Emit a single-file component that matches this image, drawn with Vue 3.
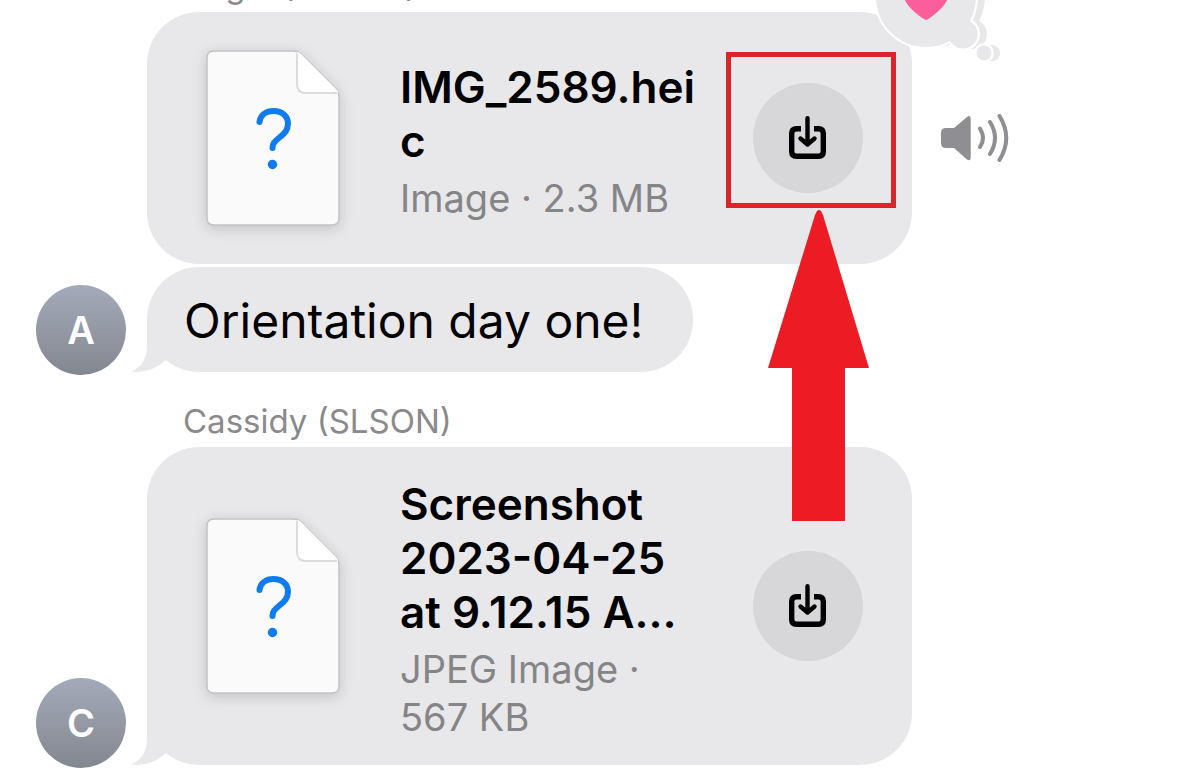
<script setup>
const messages = [
  {
    id: 1,
    kind: 'file',
    sender: 'Angie (SLSON)',
    title: 'IMG_2589.heic',
    meta: 'Image · 2.3\u00a0MB',
    highlighted: true
  },
  { id: 2, kind: 'text', initial: 'A', text: 'Orientation day one!' },
  {
    id: 3,
    kind: 'file',
    sender: 'Cassidy (SLSON)',
    initial: 'C',
    title: 'Screenshot 2023-04-25 at\u00a09.12.15 A…',
    meta: 'JPEG Image · 567\u00a0KB'
  }
]
</script>

<template>
  <main class="chat">
    <section class="feed">
      <article v-for="m in messages" :key="m.id" class="message">
        <p v-if="m.sender" class="sender">{{ m.sender }}</p>
        <div class="row">
          <div class="side">
            <span v-if="m.initial" class="avatar">{{ m.initial }}</span>
          </div>

          <div v-if="m.kind === 'file'" class="bubble card">
            <svg class="file" viewBox="0 0 134 177" aria-hidden="true">
              <path class="sheet" d="M8 1H87Q92 1 95 4L130 39Q133 42 133 47V168Q133 175 126 175H8Q1 175 1 168V8Q1 1 8 1Z" />
              <path class="fold" d="M91 2V34Q91 43 100 43H132Q132 41 130 39L95 4Q93 2 91 2Z" />
              <path class="fold-line" d="M91 3V34Q91 43 100 43H131" />
              <path class="mark" d="M53.500 72C54.500 65 60 61 67.500 61C76 61 82 66 82 73.500C82 80 78.500 83.500 73.500 87.500C68.500 91.500 66.500 93.500 66.500 98" />
              <circle class="dot" cx="66.500" cy="114.500" r="4.700" />
            </svg>
            <div class="info">
              <h2 class="title">{{ m.title }}</h2>
              <p class="meta">{{ m.meta }}</p>
            </div>
            <div class="action">
              <button class="download" type="button" :aria-label="'Download ' + m.title">
                <svg viewBox="0 0 40 46" aria-hidden="true">
                  <path class="tray" d="M13 13.700H8.500Q3.700 13.700 3.700 18.500V36.500Q3.700 41.300 8.500 41.300H30.500Q35.300 41.300 35.300 36.500V18.500Q35.300 13.700 30.500 13.700H26" />
                  <path class="down" d="M19.500 3.200V29M12.500 23.500L19.500 29.500L26.500 23.500" />
                </svg>
              </button>
              <template v-if="m.highlighted">
                <span class="frame"></span>
                <svg class="arrow" viewBox="0 0 101 311" aria-hidden="true">
                  <path d="M49 1Q51 -1 53 1L55 5L101 158H77V311H24V158H0L47 5Z" />
                </svg>
              </template>
            </div>
            <svg v-if="m.highlighted" class="reaction" viewBox="0 0 134 77" aria-hidden="true">
              <g>
                <circle cx="65" cy="-3" r="50" />
                <circle cx="102" cy="34" r="15" />
                <circle cx="122" cy="53" r="8" />
              </g>
              <g class="front-edge">
                <circle cx="56" cy="-3" r="52" />
                <circle cx="93" cy="34" r="17" />
                <circle cx="114" cy="53" r="10" />
              </g>
              <g class="front">
                <circle cx="56" cy="-3" r="50" />
                <circle cx="93" cy="34" r="14.500" />
                <circle cx="114" cy="53" r="7.500" />
              </g>
              <path class="heart" d="M56 20Q53 19 47 14Q37 6 34 -2Q31 -16 44 -18Q52 -18 56 -11Q60 -18 68 -18Q81 -16 78 -2Q75 6 65 14Q59 19 56 20Z" />
            </svg>
            <svg v-if="m.initial" class="tail" viewBox="0 0 52 52" aria-hidden="true">
              <path d="M16 0V26Q16 45 0 51.500Q20 54 35 40L52 32V0Z" />
            </svg>
          </div>

          <div v-else class="bubble text">
            <p>{{ m.text }}</p>
            <svg class="tail" viewBox="0 0 52 52" aria-hidden="true">
              <path d="M16 0V26Q16 45 0 51.500Q20 54 35 40L52 32V0Z" />
            </svg>
          </div>

          <button v-if="m.highlighted" class="speaker" type="button" aria-label="Play sound">
            <svg viewBox="0 0 70 50" aria-hidden="true">
              <path class="cone" d="M6 15H14L27 4Q30.700 1.500 30.700 6V44Q30.700 49 27 46.500L14 35H6Q1 35 1 30V20Q1 15 6 15Z" />
              <path class="wave" d="M40 15.500Q46 25 40 34M50 9Q60 25 50 41M59.500 3Q73 25 59.500 47" />
            </svg>
          </button>
        </div>
      </article>
    </section>
  </main>
</template>

<style>
body {
  margin: 0;
  background: #fff;
}
</style>

<style scoped>
.chat {
  height: 100vh;
  overflow: hidden;
  background: #fff;
  font-family: Inter, "Liberation Sans", sans-serif;
  color: #000;
}
/* The thread is scrolled so that its first name is partly out of view. */
.feed {
  margin-top: -63px;
}
.message + .message {
  margin-top: 3px;
}
.message:last-child {
  margin-top: 0;
}
p,
h2 {
  margin: 0;
}
.sender {
  padding: 29px 36px 6px 183px;
  font-size: 33px;
  line-height: 40px;
  color: #8a8a8d;
}
.row {
  display: flex;
  align-items: flex-end;
  padding-left: 36px;
}
.side {
  flex: 0 0 111px;
}
.avatar {
  display: flex;
  align-items: center;
  justify-content: center;
  width: 90px;
  height: 90px;
  margin-bottom: -3px;
  border-radius: 50%;
  background: linear-gradient(#a4aaba, #83878f);
  color: #fff;
  font-size: 38px;
  font-weight: 600;
}
.bubble {
  position: relative;
  box-sizing: border-box;
  border-radius: 52px;
  background: #e8e8ea;
}
.tail {
  position: absolute;
  left: -16px;
  bottom: 0;
  width: 52px;
  height: 52px;
  fill: #e8e8ea;
}
.text {
  padding: 24px 50px 21px 37px;
  font-size: 48px;
  line-height: 60px;
}
.text p {
  position: relative;
  z-index: 1;
}
.card {
  display: flex;
  align-items: center;
  flex: 0 1 765px;
  min-height: 252px;
  padding: 0 49px 0 59px;
}
.file {
  flex: none;
  width: 134px;
  height: 177px;
  overflow: visible;
  filter: drop-shadow(0 3px 7px rgba(0, 0, 0, 0.16));
}
.sheet {
  fill: #fafafa;
  stroke: #c4c4c7;
  stroke-width: 1.5;
}
.fold {
  fill: #fff;
}
.fold-line {
  fill: none;
  stroke: #dcdcde;
  stroke-width: 2;
}
.mark {
  fill: none;
  stroke: #0f7bf0;
  stroke-width: 6;
  stroke-linecap: round;
}
.dot {
  fill: #0f7bf0;
}
.info {
  flex: 1;
  min-width: 0;
  padding: 30px 48px 24px 60px;
}
.title {
  font-size: 44px;
  line-height: 54px;
  font-weight: 600;
  overflow-wrap: anywhere;
}
.meta {
  margin-top: 6px;
  font-size: 38px;
  line-height: 48px;
  color: #858588;
}
.action {
  position: relative;
  flex: none;
}
button {
  padding: 0;
  border: 0;
  background: none;
  cursor: pointer;
}
.download {
  display: flex;
  align-items: center;
  justify-content: center;
  width: 110px;
  height: 110px;
  border-radius: 50%;
  background: #d7d7d9;
}
.download svg {
  width: 40px;
  height: 46px;
  fill: none;
  stroke: #000;
}
.tray {
  stroke-width: 5.4;
}
.down {
  stroke-width: 4.4;
  stroke-linecap: round;
  stroke-linejoin: round;
}
.frame {
  position: absolute;
  top: -31px;
  left: -27px;
  box-sizing: border-box;
  width: 170px;
  height: 156px;
  border: 5px solid #dc2429;
  pointer-events: none;
}
.arrow {
  position: absolute;
  top: 127px;
  left: 15px;
  z-index: 2;
  width: 101px;
  height: 311px;
  fill: #ed1c24;
  pointer-events: none;
}
.reaction {
  position: absolute;
  top: -12px;
  right: -92px;
  width: 134px;
  height: 77px;
  fill: #e8e8ea;
}
.front-edge {
  fill: #fff;
}
.heart {
  fill: #fc5d9b;
}
.speaker {
  align-self: center;
  flex: none;
  height: 50px;
  margin-left: 28px;
}
.speaker svg {
  display: block;
  width: 70px;
  height: 50px;
}
.cone {
  fill: #8e8e93;
}
.wave {
  fill: none;
  stroke: #8e8e93;
  stroke-width: 4;
  stroke-linecap: round;
}
</style>
